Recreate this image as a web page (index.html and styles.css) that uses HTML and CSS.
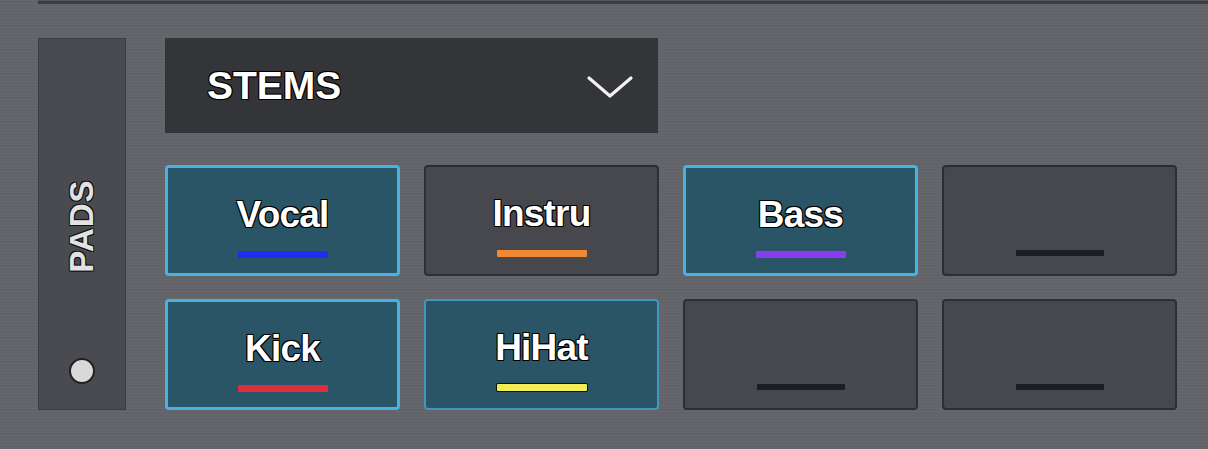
FILE: index.html
```html
<!DOCTYPE html>
<html lang="en">
<head>
  <meta charset="UTF-8">
  <title>Pads</title>
  <link rel="stylesheet" href="styles.css">
</head>
<body>
  <div class="topline"></div>
  <div class="panel">
    <div class="side">
      <span class="side-label">PADS</span>
      <span class="led"></span>
    </div>
    <div class="main">
      <div class="dropdown">
        <span class="dropdown-text">STEMS</span>
        <svg class="chevron" width="48" height="28" viewBox="0 0 48 28">
          <polyline points="3,5 24,23 45,5" fill="none" stroke="#f2f2f2" stroke-width="3.2" stroke-linecap="round" stroke-linejoin="round"/>
        </svg>
      </div>
      <div class="pads">
        <div class="pad active"><span class="pad-name">Vocal</span><span class="bar vocal"></span></div>
        <div class="pad"><span class="pad-name">Instru</span><span class="bar instru"></span></div>
        <div class="pad active"><span class="pad-name">Bass</span><span class="bar bass"></span></div>
        <div class="pad"><span class="pad-name"></span><span class="bar empty"></span></div>
        <div class="pad active"><span class="pad-name">Kick</span><span class="bar kick"></span></div>
        <div class="pad active dim"><span class="pad-name">HiHat</span><span class="bar hihat"></span></div>
        <div class="pad"><span class="pad-name"></span><span class="bar empty"></span></div>
        <div class="pad"><span class="pad-name"></span><span class="bar empty"></span></div>
      </div>
    </div>
  </div>
</body>
</html>
```

FILE: styles.css
```css
body {
  margin: 0;
  width: 1208px;
  height: 449px;
  overflow: hidden;
  font-family: "Liberation Sans", Arial, sans-serif;
  background-color: #636469;
  background-image: repeating-linear-gradient(180deg, rgba(255, 255, 255, 0.025) 0px, rgba(255, 255, 255, 0.025) 1px, rgba(0, 0, 0, 0.03) 2px, rgba(0, 0, 0, 0) 3px);
}
.topline {
  margin-left: 38px;
  height: 3px;
  background-color: #3c3d42;
  border-top: 1px solid #55565b;
}
.panel {
  display: flex;
  padding: 34px 0 0 38px;
  gap: 39px;
}
.side {
  width: 86px;
  height: 370px;
  background-color: #4a4b50;
  border: 1px solid #3c3d41;
  display: flex;
  flex-direction: column;
  align-items: center;
}
.side-label {
  margin-top: 168px;
  height: 38px;
  line-height: 38px;
  transform: rotate(-90deg);
  font-size: 33px;
  font-weight: bold;
  color: #e2e2e2;
  letter-spacing: 1px;
  text-shadow: 1px 1px 0 #111, -1px -1px 0 #111, 1px -1px 0 #111, -1px 1px 0 #111;
}
.led {
  margin-top: 113px;
  width: 22px;
  height: 22px;
  border-radius: 50%;
  background-color: #d9d9d9;
  border: 2px solid #1f2023;
}
.main {
  display: flex;
  flex-direction: column;
}
.dropdown {
  width: 493px;
  height: 95px;
  background-color: #333538;
  display: flex;
  align-items: center;
  justify-content: space-between;
  padding: 0 24px 0 42px;
  box-sizing: border-box;
}
.dropdown-text {
  font-size: 39px;
  font-weight: bold;
  color: #fff;
  text-shadow: 1px 1px 0 #000, -1px -1px 0 #000, 1px -1px 0 #000, -1px 1px 0 #000;
}
.chevron {
  margin-top: 2px;
}
.pads {
  margin-top: 32px;
  display: grid;
  grid-template-columns: repeat(4, 235px);
  grid-auto-rows: 111px;
  column-gap: 24px;
  row-gap: 23px;
}
.pad {
  box-sizing: border-box;
  background-color: #47484d;
  border: 2px solid #2d2e32;
  border-radius: 4px;
  display: flex;
  flex-direction: column;
  align-items: center;
}
.pad.active {
  background-color: #2a5566;
  border: 3px solid #48b2e0;
}
.pad.active.dim {
  border: 2px solid #4397bd;
}
.pad-name {
  height: 40px;
  margin-top: 27px;
  font-size: 37px;
  font-weight: bold;
  color: #fff;
  letter-spacing: -0.8px;
  line-height: 40px;
  text-shadow: 1px 1px 0 #000, -1px -1px 0 #000, 1px -1px 0 #000, -1px 1px 0 #000, 0 1px 0 #000, 0 -1px 0 #000;
}
.bar {
  margin-top: 16px;
  width: 90px;
  height: 7px;
  border-radius: 1px;
}
.vocal { background-color: #1b2ef2; }
.instru { background-color: #f08a32; }
.bass { background-color: #8a3df0; }
.kick { background-color: #de2f3b; }
.hihat { background-color: #f2ec55; box-shadow: 0 0 0 1px #111; }
.empty { background-color: #1d1e22; width: 88px; height: 6px; }
```
